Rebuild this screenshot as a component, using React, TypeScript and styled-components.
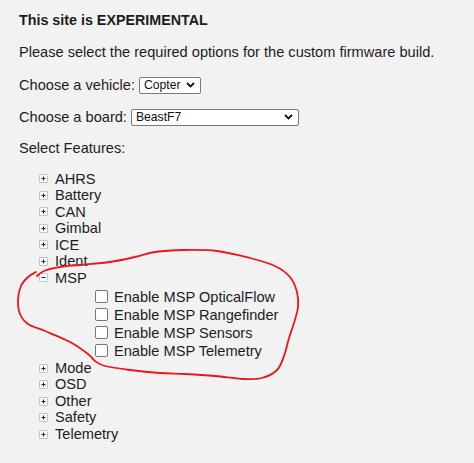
import React from "react";
import styled, { createGlobalStyle } from "styled-components";

const GlobalStyle = createGlobalStyle`
  html, body {
    margin: 0;
    padding: 0;
    background: #f2f2f2;
  }
  body {
    font-family: "Liberation Sans", Arial, sans-serif;
    color: #1c1c1c;
  }
`;

const Page = styled.div`
  position: relative;
  width: 474px;
  height: 463px;
  box-sizing: border-box;
  padding: 12px 0 0 19px;
  display: flex;
  flex-direction: column;
  overflow: hidden;
`;

const Heading = styled.div`
  font-weight: bold;
  font-size: 14.3px;
  line-height: 16px;
`;

const Para = styled.div<{ $top: number }>`
  margin-top: ${(p) => p.$top}px;
  font-size: 14.6px;
  line-height: 17px;
`;

const Row = styled.div<{ $top: number }>`
  margin-top: ${(p) => p.$top}px;
  display: flex;
  align-items: center;
  gap: 4px;
  font-size: 14.6px;
  height: 18px;
`;

const Select = styled.div<{ $width: number }>`
  width: ${(p) => p.$width}px;
  height: 17px;
  box-sizing: border-box;
  border: 1px solid #7a7a7a;
  border-radius: 2px;
  background: #fff;
  display: flex;
  align-items: center;
  justify-content: space-between;
  padding: 0 5px 0 4px;
  font-size: 12.2px;
  color: #111;
`;

const Chevron = () => (
  <svg width="9" height="6" viewBox="0 0 9 6">
    <path d="M1 1 L4.5 4.5 L8 1" fill="none" stroke="#111" strokeWidth="1.8" />
  </svg>
);

const Tree = styled.ul`
  list-style: none;
  margin: 14px 0 0 0;
  padding: 0 0 0 20px;
  font-size: 14.6px;
`;

const Item = styled.li`
  line-height: 16.5px;
`;

const ItemHead = styled.div`
  display: flex;
  align-items: center;
  height: 16.5px;
`;

const Toggle = styled.span`
  width: 9px;
  height: 9px;
  box-sizing: border-box;
  border: 1px solid #c4c4c4;
  border-radius: 1px;
  background: #fbfbfb;
  margin-right: 7px;
  display: inline-flex;
`;

const SubList = styled.ul`
  list-style: none;
  margin: 1.75px 0 0 0;
  padding: 0 0 0 56px;
`;

const SubItem = styled.li`
  display: flex;
  align-items: center;
  height: 18px;
`;

const Box = styled.span`
  width: 13px;
  height: 13px;
  box-sizing: border-box;
  border: 1px solid #767676;
  border-radius: 2px;
  background: #fff;
  margin-right: 6px;
`;

const Overlay = styled.svg`
  position: absolute;
  left: 0;
  top: 0;
  pointer-events: none;
`;

const ToggleIcon = ({ open }: { open: boolean }) => (
  <Toggle>
    <svg width="7" height="7" viewBox="0 0 7 7">
      <path d="M1.5 3.5 H5.5" stroke="#222" strokeWidth="1" />
      {!open && <path d="M3.5 1.5 V5.5" stroke="#222" strokeWidth="1" />}
    </svg>
  </Toggle>
);

const before = ["AHRS", "Battery", "CAN", "Gimbal", "ICE", "Ident"];
const after = ["Mode", "OSD", "Other", "Safety", "Telemetry"];
const msp = [
  "Enable MSP OpticalFlow",
  "Enable MSP Rangefinder",
  "Enable MSP Sensors",
  "Enable MSP Telemetry",
];

// hand-drawn annotation loop, smoothed through points
const loop: [number, number][] = [
  [37, 276], [44, 271], [60, 267], [80, 265], [110, 262], [135, 257],
  [155, 252], [183, 250], [217, 251], [250, 258], [275, 266], [290, 277],
  [297, 292], [298, 307], [294, 323], [289, 338], [284, 356], [277, 370],
  [262, 378], [243, 379], [215, 376], [185, 374], [160, 373], [130, 370],
  [105, 366], [95, 361], [88, 354], [70, 342], [45, 331], [28, 324],
  [20, 314], [18, 300], [21, 286], [28, 277], [36, 272],
];

function smooth(pts: [number, number][]) {
  let d = `M ${pts[0][0]} ${pts[0][1]}`;
  for (let i = 0; i < pts.length - 1; i++) {
    const p0 = pts[Math.max(i - 1, 0)];
    const p1 = pts[i];
    const p2 = pts[i + 1];
    const p3 = pts[Math.min(i + 2, pts.length - 1)];
    const c1x = p1[0] + (p2[0] - p0[0]) / 6;
    const c1y = p1[1] + (p2[1] - p0[1]) / 6;
    const c2x = p2[0] - (p3[0] - p1[0]) / 6;
    const c2y = p2[1] - (p3[1] - p1[1]) / 6;
    d += ` C ${c1x} ${c1y}, ${c2x} ${c2y}, ${p2[0]} ${p2[1]}`;
  }
  return d;
}

export default function App() {
  return (
    <>
      <GlobalStyle />
      <Page>
        <Heading>This site is EXPERIMENTAL</Heading>
        <Para $top={15.5}>Please select the required options for the custom firmware build.</Para>
        <Row $top={15.5}>
          Choose a vehicle:
          <Select $width={62}>
            Copter <Chevron />
          </Select>
        </Row>
        <Row $top={14}>
          Choose a board:
          <Select $width={168}>
            BeastF7 <Chevron />
          </Select>
        </Row>
        <Para $top={13.5}>Select Features:</Para>
        <Tree>
          {before.map((name) => (
            <Item key={name}>
              <ItemHead>
                <ToggleIcon open={false} />
                {name}
              </ItemHead>
            </Item>
          ))}
          <Item>
            <ItemHead>
              <ToggleIcon open />
              MSP
            </ItemHead>
            <SubList>
              {msp.map((label) => (
                <SubItem key={label}>
                  <Box />
                  {label}
                </SubItem>
              ))}
            </SubList>
          </Item>
          {after.map((name) => (
            <Item key={name}>
              <ItemHead>
                <ToggleIcon open={false} />
                {name}
              </ItemHead>
            </Item>
          ))}
        </Tree>
        <Overlay width="474" height="463" viewBox="0 0 474 463">
          <path
            d={smooth(loop)}
            fill="none"
            stroke="#e8171b"
            strokeWidth="1.8"
            strokeLinecap="round"
            strokeLinejoin="round"
          />
        </Overlay>
      </Page>
    </>
  );
}
